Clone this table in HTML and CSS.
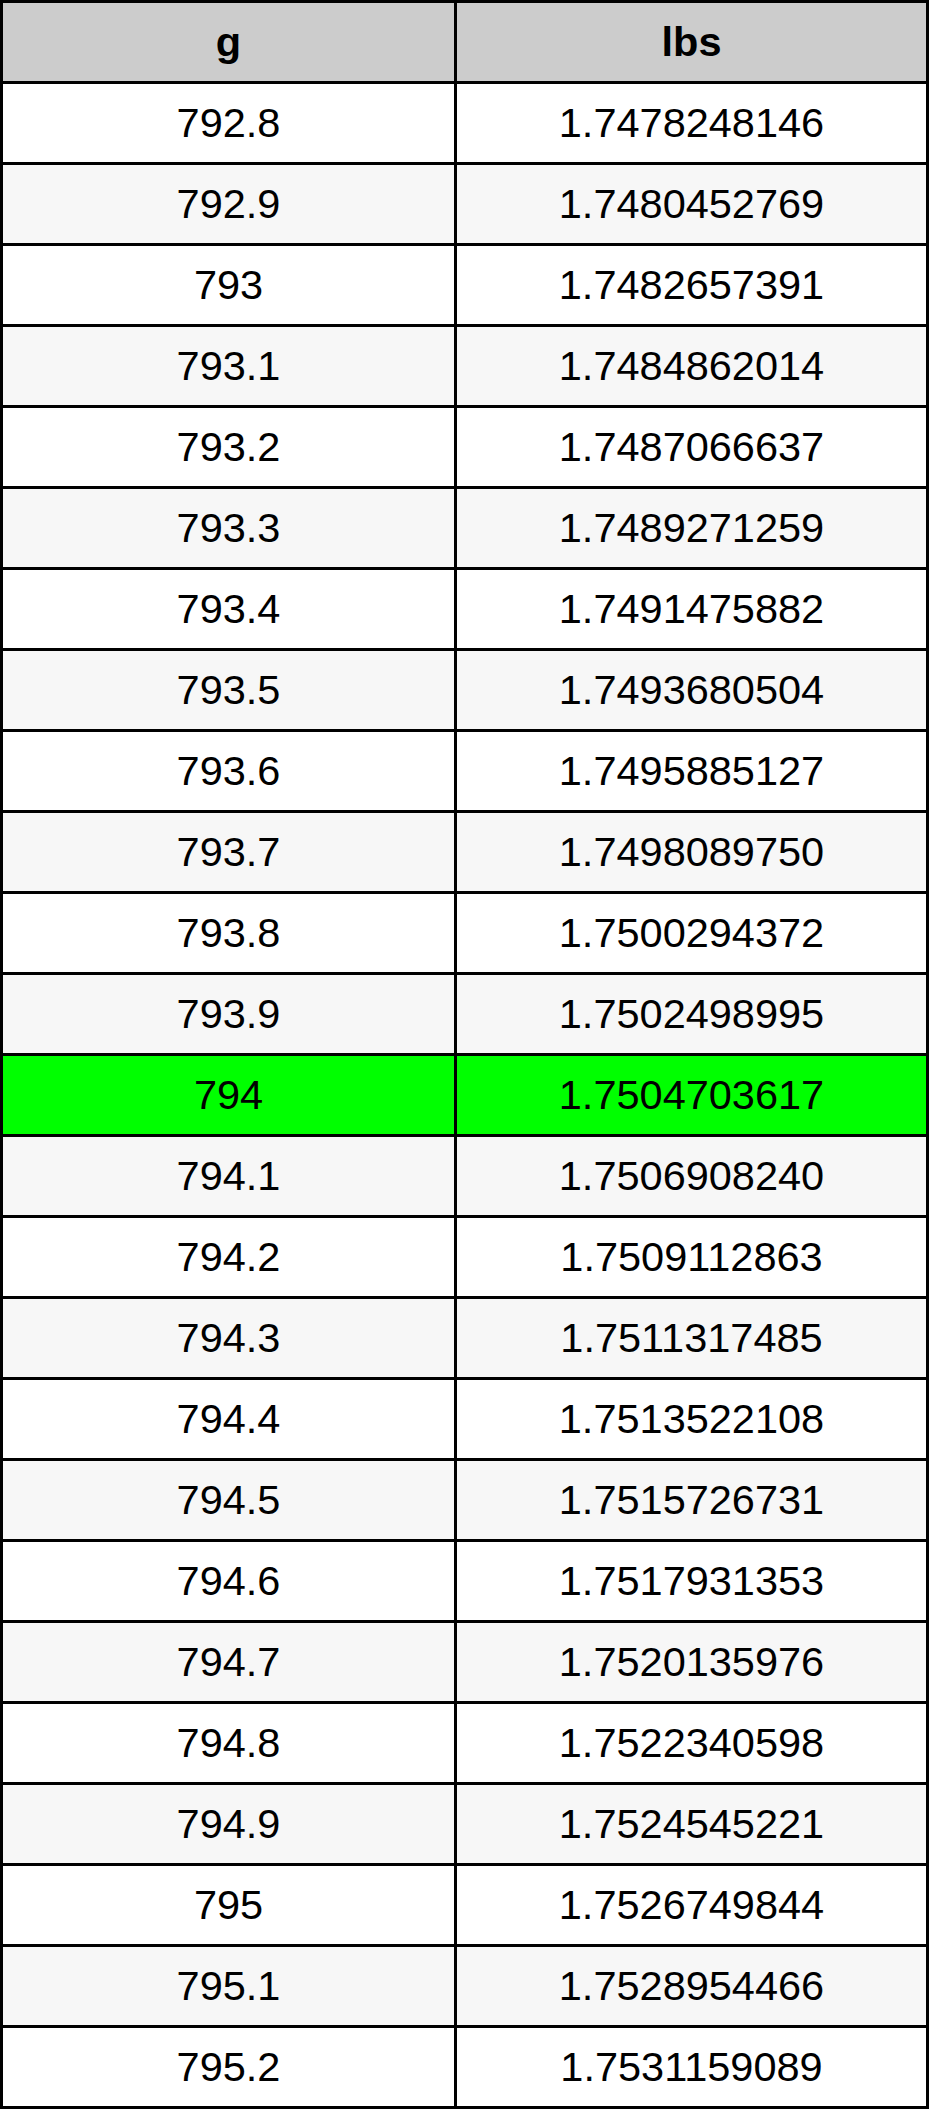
FILE: index.html
```html
<!DOCTYPE html>
<html>
<head>
<meta charset="utf-8">
<link rel="stylesheet" href="styles.css">
</head>
<body>
<table class="conv">
<colgroup><col class="c1"><col class="c2"></colgroup>
<thead><tr><th>g</th><th>lbs</th></tr></thead>
<tbody>
<tr><td>792.8</td><td>1.7478248146</td></tr>
<tr><td>792.9</td><td>1.7480452769</td></tr>
<tr><td>793</td><td>1.7482657391</td></tr>
<tr><td>793.1</td><td>1.7484862014</td></tr>
<tr><td>793.2</td><td>1.7487066637</td></tr>
<tr><td>793.3</td><td>1.7489271259</td></tr>
<tr><td>793.4</td><td>1.7491475882</td></tr>
<tr><td>793.5</td><td>1.7493680504</td></tr>
<tr><td>793.6</td><td>1.7495885127</td></tr>
<tr><td>793.7</td><td>1.7498089750</td></tr>
<tr><td>793.8</td><td>1.7500294372</td></tr>
<tr><td>793.9</td><td>1.7502498995</td></tr>
<tr class="hl"><td>794</td><td>1.7504703617</td></tr>
<tr><td>794.1</td><td>1.7506908240</td></tr>
<tr><td>794.2</td><td>1.7509112863</td></tr>
<tr><td>794.3</td><td>1.7511317485</td></tr>
<tr><td>794.4</td><td>1.7513522108</td></tr>
<tr><td>794.5</td><td>1.7515726731</td></tr>
<tr><td>794.6</td><td>1.7517931353</td></tr>
<tr><td>794.7</td><td>1.7520135976</td></tr>
<tr><td>794.8</td><td>1.7522340598</td></tr>
<tr><td>794.9</td><td>1.7524545221</td></tr>
<tr><td>795</td><td>1.7526749844</td></tr>
<tr><td>795.1</td><td>1.7528954466</td></tr>
<tr><td>795.2</td><td>1.7531159089</td></tr>
</tbody>
</table>
</body>
</html>
```
FILE: styles.css
```css
html, body {
  margin: 0;
  padding: 0;
  background: #ffffff;
}
.conv {
  border-collapse: separate;
  border-spacing: 0;
  table-layout: fixed;
  width: 929px;
  border-top: 3px solid #000;
  border-left: 3px solid #000;
  font-family: "Liberation Sans", Arial, sans-serif;
  font-size: 41.5px;
  color: #000;
}
.c1 { width: 454px; }
.c2 { width: 472px; }
.conv th, .conv td {
  height: 78px;
  padding: 0;
  text-align: center;
  vertical-align: middle;
  border-right: 3px solid #000;
  border-bottom: 3px solid #000;
  box-sizing: content-box;
  line-height: normal;
}
.conv th {
  background: #cccccc;
  font-weight: bold;
}
.conv tbody tr:nth-child(odd) td { background: #ffffff; }
.conv tbody tr:nth-child(even) td { background: #f7f7f7; }
.conv tbody tr.hl td { background: #00ff00; }
```
